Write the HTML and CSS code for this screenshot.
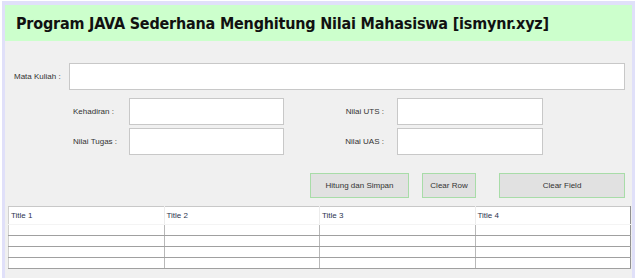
FILE: index.html
```html
<!DOCTYPE html>
<html lang="en">
  <head>
    <meta charset="UTF-8" />
    <meta name="viewport" content="width=device-width, initial-scale=1.0" />
    <title>Program JAVA Sederhana Menghitung Nilai Mahasiswa</title>
    <link rel="stylesheet" href="styles.css">
  </head>
  <body>
    <div class="frame">
      <div class="header">
        <h1>Program JAVA Sederhana Menghitung Nilai Mahasiswa [ismynr.xyz]</h1>
      </div>

      <div class="content">
        <div class="row-main">
          <label class="label-main">Mata Kuliah :</label>
          <input type="text" class="input-main" />
        </div>

        <div class="row-pair">
          <label class="label-left">Kehadiran :</label>
          <input type="text" class="input-left" />
          <label class="label-right">Nilai UTS :</label>
          <input type="text" class="input-right" />
        </div>

        <div class="row-pair">
          <label class="label-left">Nilai Tugas :</label>
          <input type="text" class="input-left" />
          <label class="label-right">Nilai UAS :</label>
          <input type="text" class="input-right" />
        </div>

        <div class="buttons">
          <button class="btn btn-hitung">Hitung dan Simpan</button>
          <button class="btn btn-row">Clear Row</button>
          <button class="btn btn-field">Clear Field</button>
        </div>

        <table class="grid">
          <thead>
            <tr>
              <th>Title 1</th>
              <th>Title 2</th>
              <th>Title 3</th>
              <th>Title 4</th>
            </tr>
          </thead>
          <tbody>
            <tr><td></td><td></td><td></td><td></td></tr>
            <tr><td></td><td></td><td></td><td></td></tr>
            <tr><td></td><td></td><td></td><td></td></tr>
            <tr><td></td><td></td><td></td><td></td></tr>
          </tbody>
        </table>
      </div>
    </div>
  </body>
</html>
```

FILE: styles.css
```css
/* General styling */
body {
  margin: 0;
  padding: 1px 5px 0 2px;
  background-color: #fff;
  font-family: "Liberation Sans", Arial, sans-serif;
  color: #222;
}

.frame {
  border: 4px solid #e0e0f9;
  border-left-width: 3px;
  border-right-width: 3px;
  border-bottom: none;
  background-color: #f0f0f0;
}

/* Header */
.header {
  background-color: #ccffcc;
  height: 36px;
  display: flex;
  align-items: center;
  padding-left: 11px;
}

.header h1 {
  margin: 0;
  font-family: "DejaVu Sans Condensed", "DejaVu Sans", sans-serif;
  font-size: 16px;
  font-weight: bold;
  letter-spacing: -0.2px;
  color: #111;
}

.content {
  padding: 22px 0 12px 0;
}

label {
  font-size: 8px;
  color: #333;
}

input[type="text"] {
  box-sizing: border-box;
  height: 27px;
  border: 1px solid #c8c8c8;
  background-color: #fff;
  margin: 0;
  padding: 0 4px;
}

/* Mata kuliah row */
.row-main {
  display: flex;
  align-items: center;
  padding-left: 9px;
  margin-bottom: 8px;
}

.label-main {
  width: 55px;
}

.input-main {
  width: 556px;
}

/* Paired rows */
.row-pair {
  display: flex;
  align-items: center;
  padding-left: 68px;
  margin-bottom: 3px;
}

.label-left {
  width: 56px;
}

.input-left {
  width: 155px;
}

.label-right {
  width: 100px;
  text-align: right;
  padding-right: 13px;
}

.input-right {
  width: 146px;
}

/* Buttons */
.buttons {
  display: flex;
  justify-content: flex-end;
  padding-right: 7px;
  margin-top: 18px;
}

.btn {
  height: 25px;
  background-color: #e1e1e1;
  border: 1px solid #a8dca8;
  font-family: "Liberation Sans", Arial, sans-serif;
  font-size: 8px;
  color: #333;
  padding: 0;
}

.btn-hitung {
  width: 99px;
  margin-right: 13px;
}

.btn-row {
  width: 54px;
  margin-right: 23px;
}

.btn-field {
  width: 126px;
}

/* Table */
.grid {
  margin: 8px 1px 0 3px;
  width: 623px;
  border-collapse: collapse;
  background-color: #fff;
  table-layout: fixed;
  border-top: 1px solid #c8c8c8;
  border-left: 1px solid #d0d0d0;
  border-right: 1px solid #909090;
}

.grid th {
  height: 17px;
  padding: 0 0 0 2px;
  text-align: left;
  font-size: 8px;
  font-weight: normal;
  color: #2c3550;
  border-left: 1px solid #ececec;
  border-bottom: 1px solid #f4f4f4;
}

.grid td {
  height: 10px;
  padding: 0;
  border-left: 1px solid #b8b8b8;
  border-bottom: 1px solid #a0a0a0;
}

.grid th:first-child,
.grid td:first-child {
  border-left: none;
}
```
